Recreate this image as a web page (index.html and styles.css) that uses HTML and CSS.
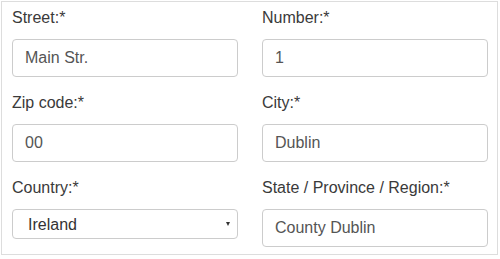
FILE: index.html
```html
<!DOCTYPE html>
<html>
<head>
<meta charset="utf-8">
<link rel="stylesheet" href="styles.css">
</head>
<body>
<form class="panel">
  <div class="grid">
    <div class="field">
      <label class="label">Street:*</label>
      <input class="control" type="text" value="Main Str.">
    </div>
    <div class="field">
      <label class="label">Number:*</label>
      <input class="control" type="text" value="1">
    </div>
    <div class="field">
      <label class="label">Zip code:*</label>
      <input class="control" type="text" value="00">
    </div>
    <div class="field">
      <label class="label">City:*</label>
      <input class="control" type="text" value="Dublin">
    </div>
    <div class="field">
      <label class="label">Country:*</label>
      <div class="select-wrap">
        <select class="select"><option>Ireland</option></select>
      </div>
    </div>
    <div class="field">
      <label class="label">State / Province / Region:*</label>
      <input class="control" type="text" value="County Dublin">
    </div>
  </div>
</form>
</body>
</html>
```

FILE: styles.css
```css
html, body {
  margin: 0;
  padding: 0;
  background: #ffffff;
}
body {
  font-family: "Liberation Sans", Arial, sans-serif;
  color: #333333;
}
.panel {
  margin: 1px 0 0 1px;
  width: 497px;
  box-sizing: border-box;
  border: 1px solid #dddddd;
  padding: 5px 9px 7px 10px;
}
.grid {
  display: grid;
  grid-template-columns: 226px 226px;
  column-gap: 24px;
  row-gap: 15px;
}
.field {
  display: flex;
  flex-direction: column;
}
.label {
  font-size: 16px;
  line-height: 22px;
  height: 22px;
  color: #3a3a3a;
  margin-bottom: 10px;
}
.control {
  box-sizing: border-box;
  width: 226px;
  height: 38px;
  margin: 0;
  border: 1px solid #cccccc;
  border-radius: 4px;
  padding: 0 12px;
  font-family: "Liberation Sans", Arial, sans-serif;
  font-size: 16px;
  color: #555555;
  background: #ffffff;
  outline: none;
}
.select-wrap {
  position: relative;
  width: 226px;
  height: 30px;
}
.select {
  -webkit-appearance: none;
  appearance: none;
  box-sizing: border-box;
  width: 226px;
  height: 30px;
  margin: 0;
  border: 1px solid #cccccc;
  border-radius: 4px;
  padding: 0 12px 0 15px;
  font-family: "Liberation Sans", Arial, sans-serif;
  font-size: 16px;
  color: #333333;
  background: #ffffff;
  outline: none;
}
.select-wrap::after {
  content: "";
  position: absolute;
  right: 8px;
  top: 13px;
  width: 0;
  height: 0;
  border-left: 2.5px solid transparent;
  border-right: 2.5px solid transparent;
  border-top: 4px solid #333333;
  pointer-events: none;
}
```
